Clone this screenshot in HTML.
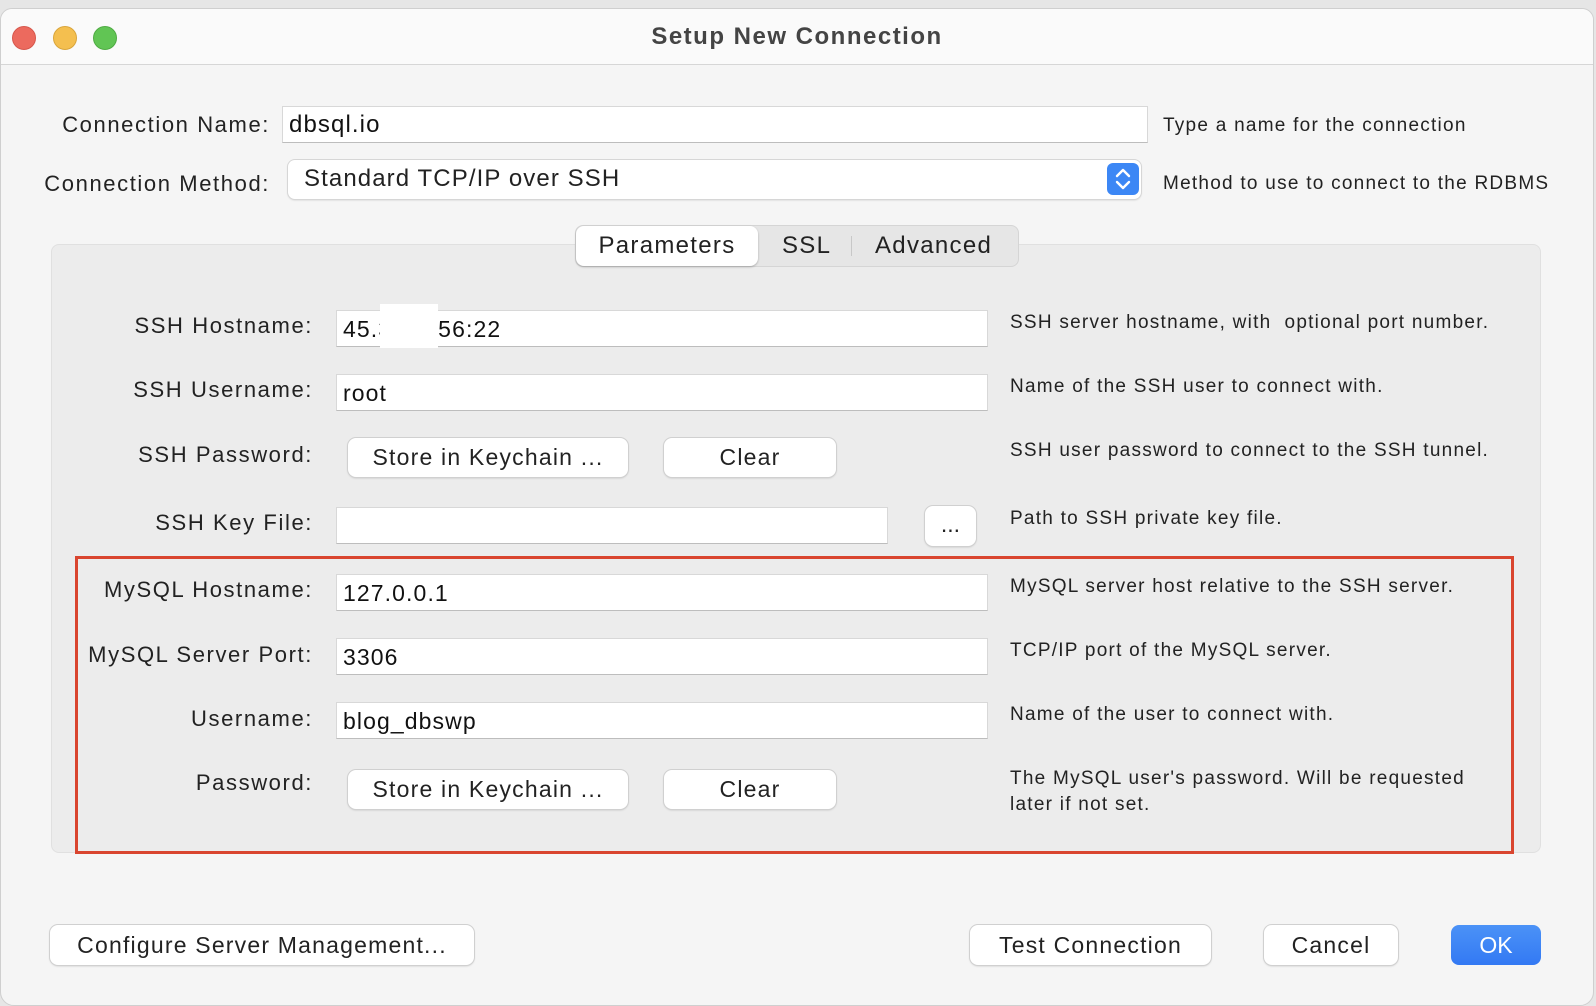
<!DOCTYPE html>
<html><head><meta charset="utf-8"><style>
*{box-sizing:border-box;margin:0;padding:0}
body{width:1596px;height:1006px;background:#e6e6e6;font-family:"Liberation Sans",sans-serif;color:#222;position:relative;overflow:hidden}
.win{position:absolute;left:0;top:8px;width:1594px;height:998px;background:#f5f5f5;border-radius:12px 12px 14px 14px;border:1px solid #cfcfcf;overflow:hidden}
.tb{position:absolute;left:0;top:0;width:100%;height:56px;background:#fafafa;border-bottom:1px solid #d6d6d6}
.dot{position:absolute;top:17px;width:24px;height:24px;border-radius:50%}
.title{position:absolute;left:0;width:100%;top:14px;text-align:center;font-weight:bold;font-size:24px;color:#444;letter-spacing:1.5px}
.a{position:absolute}
.lbl{position:absolute;font-size:22px;color:#222;text-align:right;white-space:nowrap;letter-spacing:1.6px;margin-top:2px}
.hint{position:absolute;font-size:19px;color:#222;white-space:nowrap;line-height:26px;letter-spacing:1.25px;margin-top:2px}
.in{position:absolute;background:#fff;border:1px solid #d8d8d8;border-bottom-color:#bdbdbd;font-size:23px;padding-left:6px;line-height:36px;color:#111;letter-spacing:1.1px;white-space:nowrap}
.btn{position:absolute;background:#fff;border-radius:8px;box-shadow:0 0 0 1px #d0d0d0,0 1px 2px rgba(0,0,0,.2);font-size:23px;text-align:center;color:#222;letter-spacing:1.2px;white-space:nowrap}
.tab{font-size:24px;letter-spacing:1.3px}
</style></head><body>
<div class="win">
<div class="tb">
<div class="dot" style="left:11px;background:#ec6a5e;border:1px solid #d6574c"></div>
<div class="dot" style="left:52px;background:#f4bf4f;border:1px solid #d9a53b"></div>
<div class="dot" style="left:92px;background:#61c554;border:1px solid #4fab43"></div>
<div class="title">Setup New Connection</div>
</div>
</div>
<div class="lbl" style="right:1326px;top:110px">Connection Name:</div>
<div class="in" style="left:282px;top:106px;width:866px;height:37px;font-size:24px">dbsql.io</div>
<div class="hint" style="left:1163px;top:111px">Type a name for the connection</div>
<div class="lbl" style="right:1326px;top:169px">Connection Method:</div>
<div class="a" style="left:288px;top:160px;width:853px;height:39px;background:#fff;border-radius:7px;box-shadow:0 0 0 1px #d6d6d6,0 1px 2px rgba(0,0,0,.18);font-size:24px;line-height:38px;padding-left:16px;letter-spacing:1.1px">Standard TCP/IP over SSH
<div class="a" style="left:819px;top:3px;width:32px;height:32px;background:#3c87f5;border-radius:6px">
<svg width="32" height="32" viewBox="0 0 32 32"><path d="M10 13l6-6 6 6M10 19l6 6 6-6" fill="none" stroke="#fff" stroke-width="2.4" stroke-linecap="round" stroke-linejoin="round"/></svg></div></div>
<div class="hint" style="left:1163px;top:169px">Method to use to connect to the RDBMS</div>

<div class="a" style="left:51px;top:244px;width:1490px;height:609px;background:#ececec;border:1px solid #e0e0e0;border-radius:8px"></div>
<div class="a" style="left:575px;top:225px;width:444px;height:42px;background:#e6e6e6;border:1px solid #d5d5d5;border-radius:8px"></div>
<div class="a tab" style="left:576px;top:226px;width:182px;height:40px;background:#fff;border-radius:8px;box-shadow:0 1px 2px rgba(0,0,0,.25);text-align:center;line-height:40px">Parameters</div>
<div class="a tab" style="left:782px;top:226px;line-height:40px">SSL</div>
<div class="a" style="left:851px;top:236px;width:1px;height:20px;background:#c8c8c8"></div>
<div class="a tab" style="left:875px;top:226px;line-height:40px">Advanced</div>

<div class="lbl" style="right:1283px;top:311px">SSH Hostname:</div>
<div class="in" style="left:336px;top:310px;width:652px;height:37px">45.3<span style="display:inline-block;width:46px"></span>56:22</div>
<div class="a" style="left:380px;top:304px;width:58px;height:44px;background:#fff"></div>
<div class="hint" style="left:1010px;top:308px">SSH server hostname, with&nbsp; optional port number.</div>

<div class="lbl" style="right:1283px;top:375px">SSH Username:</div>
<div class="in" style="left:336px;top:374px;width:652px;height:37px">root</div>
<div class="hint" style="left:1010px;top:372px">Name of the SSH user to connect with.</div>

<div class="lbl" style="right:1283px;top:440px">SSH Password:</div>
<div class="btn" style="left:348px;top:438px;width:280px;height:39px;line-height:39px">Store in Keychain ...</div>
<div class="btn" style="left:664px;top:438px;width:172px;height:39px;line-height:39px">Clear</div>
<div class="hint" style="left:1010px;top:436px">SSH user password to connect to the SSH tunnel.</div>

<div class="lbl" style="right:1283px;top:508px">SSH Key File:</div>
<div class="in" style="left:336px;top:507px;width:552px;height:37px"></div>
<div class="btn" style="left:925px;top:506px;width:51px;height:40px;line-height:36px;letter-spacing:0">...</div>
<div class="hint" style="left:1010px;top:504px">Path to SSH private key file.</div>

<div class="lbl" style="right:1283px;top:575px">MySQL Hostname:</div>
<div class="in" style="left:336px;top:574px;width:652px;height:37px">127.0.0.1</div>
<div class="hint" style="left:1010px;top:572px">MySQL server host relative to the SSH server.</div>

<div class="lbl" style="right:1283px;top:640px">MySQL Server Port:</div>
<div class="in" style="left:336px;top:638px;width:652px;height:37px">3306</div>
<div class="hint" style="left:1010px;top:636px">TCP/IP port of the MySQL server.</div>

<div class="lbl" style="right:1283px;top:704px">Username:</div>
<div class="in" style="left:336px;top:702px;width:652px;height:37px">blog_dbswp</div>
<div class="hint" style="left:1010px;top:700px">Name of the user to connect with.</div>

<div class="lbl" style="right:1283px;top:768px">Password:</div>
<div class="btn" style="left:348px;top:770px;width:280px;height:39px;line-height:39px">Store in Keychain ...</div>
<div class="btn" style="left:664px;top:770px;width:172px;height:39px;line-height:39px">Clear</div>
<div class="hint" style="left:1010px;top:764px">The MySQL user's password. Will be requested<br>later if not set.</div>

<div class="a" style="left:75px;top:556px;width:1439px;height:298px;border:3px solid #d9452f"></div>

<div class="btn" style="left:50px;top:925px;width:424px;height:40px;line-height:40px">Configure Server Management...</div>
<div class="btn" style="left:970px;top:925px;width:241px;height:40px;line-height:40px">Test Connection</div>
<div class="btn" style="left:1264px;top:925px;width:134px;height:40px;line-height:40px">Cancel</div>
<div class="a" style="left:1451px;top:925px;width:90px;height:40px;line-height:40px;border-radius:8px;background:linear-gradient(#4b92f7,#3379f3);color:#fff;font-size:23px;text-align:center">OK</div>
</body></html>
